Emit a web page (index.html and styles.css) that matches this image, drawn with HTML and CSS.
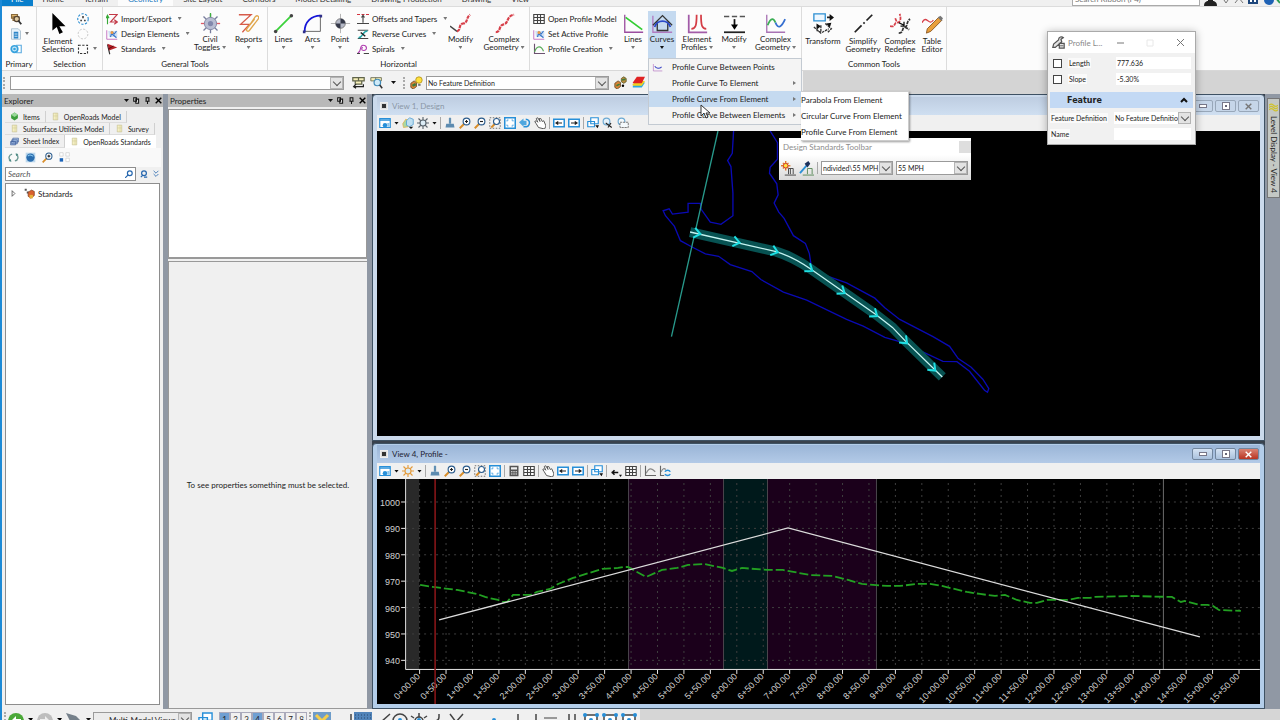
FILE: index.html
```html
<!DOCTYPE html>
<html lang="en">
<head>
  <meta charset="UTF-8">
  <meta name="viewport" content="width=device-width, initial-scale=1.0">
  <title>OpenRoads Designer</title>
  <link rel="stylesheet" href="styles.css">
</head>
<body>
  <!-- Icon sprite -->
  <svg class="sprite" aria-hidden="true">
    <symbol id="i-find" viewBox="0 0 16 16"><path d="M2 2h8v5H2zM4 5h8v5H4z" fill="#e0b870" stroke="#8a6a3a" stroke-width="1.500"/><circle cx="9" cy="8" r="3.500" fill="#dfc9a0" stroke="#554433" stroke-width="1.500"/><path d="M11 10l4 5" stroke="#333" stroke-width="2.500"/></symbol>
    <symbol id="i-doc" viewBox="0 0 16 16"><path d="M2 1h9l3 3v11H2z" fill="#e8f3fb" stroke="#9bb4c6"/><path d="M5 5h6v9H5z" fill="#2d86c8"/><path d="M6 8h4M6 11h4" stroke="#fff"/></symbol>
    <symbol id="i-info" viewBox="0 0 16 16"><path d="M9 3h6v10H9z" fill="#fff" stroke="#5cabe0" stroke-width="1.500"/><circle cx="6" cy="8" r="5.500" fill="#37a2dd"/><circle cx="6" cy="8" r="2.500" fill="none" stroke="#c8e8f8" stroke-width="1.500"/></symbol>
    <symbol id="i-cursor" viewBox="0 0 24 24"><path d="M5 0v20l5-4 3 8 4-2-4-7h7z" fill="#000"/></symbol>
    <symbol id="i-selall" viewBox="0 0 16 16"><circle cx="8" cy="8" r="7" fill="none" stroke="#2d8fd2" stroke-width="1.500" stroke-dasharray="3 2"/><path d="M8 4v3M5 11l1-2M11 11l-1-2" stroke="#333" stroke-width="2"/></symbol>
    <symbol id="i-selnone" viewBox="0 0 16 16"><circle cx="8" cy="8" r="6.500" fill="none" stroke="#b8b8b8" stroke-dasharray="3 2"/></symbol>
    <symbol id="i-fence" viewBox="0 0 16 16"><path d="M2 3h12v11H2z" fill="none" stroke="#333" stroke-width="1.500" stroke-dasharray="3 2"/></symbol>
    <symbol id="i-import" viewBox="0 0 16 16"><path d="M2 15V4M0 7l2-4 2 4" fill="none" stroke="#36a836" stroke-width="1.500"/><path d="M4 2h11L6 12h9M11 9l4 3-4 3" fill="none" stroke="#c33a48" stroke-width="1.500"/></symbol>
    <symbol id="i-design" viewBox="0 0 16 16"><path d="M1 3v12h14" fill="none" stroke="#b451b4"/><path d="M3 4h12v8H4z" fill="#cfe0f4"/><path d="M6 12l2-7 3 3 3-4M8 8l6 5" fill="none" stroke="#3775c8" stroke-width="1.500"/><circle cx="8" cy="6" r="2" fill="#ee9c45"/></symbol>
    <symbol id="i-flag" viewBox="0 0 16 16"><path d="M2 2l3 13" stroke="#333" stroke-width="1.500"/><path d="M2 1l13 5-11 4z" fill="#b32028"/><path d="M3 8l7-4" stroke="#400"/></symbol>
    <symbol id="i-civil" viewBox="0 0 24 24"><path d="M12 1v22M4 4l16 16M20 4L4 20" stroke="#777c9c" stroke-width="1.500"/><path d="M1 12h22" stroke="#e05a66" stroke-width="1.500"/><path d="M12 0v5" stroke="#3eb03e" stroke-width="1.500"/><circle cx="12" cy="12" r="7" fill="#b9bdd2" stroke="#7d819f"/><circle cx="12" cy="12" r="3" fill="#8388ac"/></symbol>
    <symbol id="i-reports" viewBox="0 0 24 24"><path d="M1 2h14L3 13h10L5 22" fill="none" stroke="#d65b4a" stroke-width="1.500"/><path d="M9 20L20 4c2-2 5 0 3 3L13 20c-2 2-4 0-3-2l9-11" fill="none" stroke="#e0a64d" stroke-width="1.500"/></symbol>
    <symbol id="i-line" viewBox="0 0 24 24"><path d="M3 21L21 3" stroke="#3bd13b" stroke-width="2"/><circle cx="3" cy="21" r="2" fill="#444"/><circle cx="21" cy="3" r="2" fill="#444"/></symbol>
    <symbol id="i-arc" viewBox="0 0 24 24"><path d="M21 3v18H3" fill="none" stroke="#555"/><path d="M3 21C3 10 11 3 21 3" fill="none" stroke="#1515d8" stroke-width="2"/><path d="M20 2h3v3h-3zM1 20h3v3H1z" fill="#30308a"/></symbol>
    <symbol id="i-point" viewBox="0 0 24 24"><path d="M12 1v22M1 12h22" stroke="#aaa"/><circle cx="12" cy="12" r="5.500" fill="#b4b8c6" stroke="#777"/><path d="M12 12V6.500a5.500 5.500 0 0 1 5.500 5.500zM12 12v5.500a5.500 5.500 0 0 1-5.500-5.500z" fill="#343848"/></symbol>
    <symbol id="i-offset" viewBox="0 0 16 16"><path d="M0 2h16" stroke="#d4333f" stroke-width="1.500" stroke-dasharray="4 2"/><path d="M8 4v9M6 6l2-3 2 3M0 14h16" fill="none" stroke="#444" stroke-width="1.500"/></symbol>
    <symbol id="i-reverse" viewBox="0 0 16 16"><path d="M1 14h14M1 3h14" stroke="#444" stroke-width="1.500"/><path d="M2 13C8 13 7 4 14 4" fill="none" stroke="#22a7a7" stroke-width="2"/><path d="M5 6l6 5" stroke="#222" stroke-width="2"/></symbol>
    <symbol id="i-spiral" viewBox="0 0 16 16"><path d="M1 13C6 13 3 3 8 3c6 0 6 7 1 7-4 0-3-4-1-4" fill="none" stroke="#b13fb1" stroke-width="1.500"/><path d="M0 14h4M9 14h7" stroke="#444" stroke-width="1.500"/></symbol>
    <symbol id="i-modify" viewBox="0 0 24 24"><path d="M0 15l8 6" fill="none" stroke="#444" stroke-width="1.500"/><path d="M8 21c5-1 1-8 7-9s3-7 8-10" fill="none" stroke="#d7404a" stroke-width="2.500" stroke-dasharray="4 1"/></symbol>
    <symbol id="i-complex" viewBox="0 0 24 24"><path d="M2 22c6 0 3-8 9-9s3-10 12-11" fill="none" stroke="#d7404a" stroke-width="2.500" stroke-dasharray="4 1"/></symbol>
    <symbol id="i-model" viewBox="0 0 16 16"><path d="M1 2h14v12H1zM1 6h14M1 10h14M6 2v12M10 2v12" fill="#fff" stroke="#444" stroke-width="1.500"/></symbol>
    <symbol id="i-profile" viewBox="0 0 16 16"><path d="M2 1v13h14" fill="none" stroke="#6c5170" stroke-width="1.500"/><path d="M2 12c3-9 9-9 12-1" fill="none" stroke="#57a957" stroke-width="1.500"/></symbol>
    <symbol id="i-pline" viewBox="0 0 24 24"><path d="M2 2v20h21" fill="none" stroke="#9b4d9f" stroke-width="1.500"/><path d="M3 5l19 14" stroke="#32cd32" stroke-width="2"/></symbol>
    <symbol id="i-pcurve" viewBox="0 0 24 24"><path d="M1 3v19h22" fill="none" stroke="#b17bc0" stroke-width="1.500"/><path d="M1 14L12 3l11 11M6 10v10h12V10" fill="none" stroke="#333" stroke-width="1.500"/><path d="M3 16C6 7 18 7 21 16" fill="none" stroke="#2a49c9" stroke-width="2"/></symbol>
    <symbol id="i-pelement" viewBox="0 0 24 24"><path d="M2 2v20h21" fill="none" stroke="#a25ba8" stroke-width="2"/><path d="M5 18c5 0 6-4 6-16M22 18c-5 0-6-4-6-16" fill="none" stroke="#d43c45" stroke-width="2"/></symbol>
    <symbol id="i-pmodify" viewBox="0 0 24 24"><path d="M0 4h24" stroke="#555" stroke-width="1.500" stroke-dasharray="6 3"/><path d="M0 22h24" stroke="#222" stroke-width="2"/><path d="M12 7v8" stroke="#111" stroke-width="2"/><path d="M8 13h8l-4 6z"/></symbol>
    <symbol id="i-pcomplex" viewBox="0 0 24 24"><path d="M2 2v20h21" fill="none" stroke="#a872b4" stroke-width="1.500"/><path d="M3 14c4-10 7-8 9-3" fill="none" stroke="#3cae55" stroke-width="2"/><path d="M12 11c3 8 7 5 11-4" fill="none" stroke="#356fd0" stroke-width="2"/></symbol>
    <symbol id="i-transform" viewBox="0 0 24 24"><path d="M1 1h13v8H1z" fill="#edf7ff" stroke="#2d8fd2" stroke-width="1.500"/><path d="M16 5h4" stroke="#222" stroke-width="2"/><path d="M19 1l5 4-5 4zM4 12l5 3-5 4zM15 12l6-1-2 6z" fill="#111"/><path d="M1 16l8 7 9-5M9 14v8l-5-2M14 12l7 6-4 4" fill="none" stroke="#333" stroke-width="1.500" stroke-dasharray="3 1"/></symbol>
    <symbol id="i-simplify" viewBox="0 0 24 24"><path d="M2 22L22 2" stroke="#222" stroke-width="2" stroke-dasharray="11 3 2 3"/></symbol>
    <symbol id="i-redefine" viewBox="0 0 24 24"><path d="M0 15c7 2 4-4 8-4s5-5 3-10M6 6l2 5" fill="none" stroke="#d7404a" stroke-width="2" stroke-dasharray="4 1"/><path d="M10 23c6 0 3-6 7-7s1-6 6-9M17 16l5 3" fill="none" stroke="#333" stroke-width="2" stroke-dasharray="4 1"/><path d="M10 11l6 3M16 10v5h-4" stroke="#111" stroke-width="1.500" fill="none"/></symbol>
    <symbol id="i-table" viewBox="0 0 24 24"><path d="M0 11c5-10 8 5 13-3" fill="none" stroke="#d7404a" stroke-width="1.500"/><path d="M6 18L19 5l4 3L10 21l-5 2z" fill="#e9a03c" stroke="#885622"/><path d="M18 5l4 4 2-3-3-3z" fill="#777"/></symbol>
    <symbol id="i-screen" viewBox="0 0 16 16"><path d="M1 2h14v4H1zM4 6v4h8V6M8 2v4" fill="#f6efb8" stroke="#60644a" stroke-width="1.500"/><path d="M2 13h12v-3M5 10l-3 3 3 2" fill="none" stroke="#222" stroke-width="1.500"/></symbol>
    <symbol id="i-lens" viewBox="0 0 16 16"><path d="M1 2h13v4H1zM7 2v4" fill="#f6efb8" stroke="#60644a"/><circle cx="9" cy="8" r="4" fill="#cfeaf8" stroke="#408bb8" stroke-width="1.500"/><path d="M12 11l3 4" stroke="#333" stroke-width="2"/></symbol>
    <symbol id="i-bulb" viewBox="0 0 16 16"><path d="M1 9l4-3 3 2v5l-4 3-3-2z" fill="#d98336" stroke="#654a22"/><path d="M3 12l4-2" stroke="#3c7d3c" stroke-width="3"/><circle cx="11" cy="5" r="4" fill="#ffe03b" stroke="#ae901c"/><path d="M10 10h3v2h-3z" fill="#666"/></symbol>
    <symbol id="i-feature" viewBox="0 0 16 16"><path d="M1 9l4-3 3 2v5l-4 3-3-2z" fill="#d98336" stroke="#654a22"/><path d="M9 3l3-2 3 2v4l-3 2-3-2z" fill="#b98a3e" stroke="#5a5a22"/><path d="M3 12l4-2M10 5l4-1" stroke="#3c7d3c" stroke-width="2"/><circle cx="11" cy="12" r="1.500"/></symbol>
    <symbol id="i-layers" viewBox="0 0 16 16"><path d="M1 12l4-4h11l-4 6H1z" fill="#2da8e0"/><path d="M1 10l4-4h11l-4 6H1z" fill="#f1d21f"/><path d="M1 8l5-7h10l-4 8H1z" fill="#e02222"/></symbol>
    <symbol id="i-pin" viewBox="0 0 10 10"><path d="M3 1h4v5H3zM2 6h6M5 6v4" fill="none" stroke="#111" stroke-width="1.500"/></symbol>
    <symbol id="i-float" viewBox="0 0 10 10"><path d="M1 1h4v5H1zM4 3h4v6H4z" fill="#ddd" stroke="#111" stroke-width="1.500"/></symbol>
    <symbol id="i-x" viewBox="0 0 10 10"><path d="M1 1l8 8M9 1L1 9" stroke="currentColor" stroke-width="2"/></symbol>
    <symbol id="i-gem" viewBox="0 0 16 16"><path d="M2 5l6-4 6 4v6l-6 4-6-4z" fill="#3c9e3c"/><path d="M2 5l6-4 6 4-6 4z" fill="#9ad79a"/></symbol>
    <symbol id="i-db" viewBox="0 0 16 16"><path d="M4 2h8v12H4z" fill="#f5efc2" stroke="#c0b987"/><path d="M4 7h8M9 2v12" stroke="#cfc896"/></symbol>
    <symbol id="i-sheets" viewBox="0 0 16 16"><path d="M5 2h10v7H5zM3 5h10v7H3zM1 8h9v6H1z" fill="#a8c1e6" stroke="#2b4c8c"/></symbol>
    <symbol id="i-refresh" viewBox="0 0 16 16"><path d="M6 3c-5 1-6 7-2 10M10 13c5-1 6-7 2-10" fill="none" stroke="#6b9893" stroke-width="2"/><path d="M4 10l1 4-4-1zM12 6l-1-4 4 1z" fill="#4b8983"/></symbol>
    <symbol id="i-globe" viewBox="0 0 16 16"><path d="M1 1h14v14H1z" fill="#bcd7ec"/><circle cx="8" cy="8" r="6" fill="#2a6dae"/><path d="M4 6c4-4 6 0 8 0" stroke="#8ecbf0" stroke-width="1.500" fill="none"/></symbol>
    <symbol id="i-zoomin" viewBox="0 0 16 16"><path d="M1 15l6-6" stroke="#d98e2b" stroke-width="2.500"/><circle cx="10" cy="6" r="4.500" fill="#fff" stroke="#285a8c" stroke-width="1.500"/><path d="M8 6h4M10 4v4" stroke="#222" stroke-width="1.500"/></symbol>
    <symbol id="i-zoomout" viewBox="0 0 16 16"><path d="M1 15l6-6" stroke="#d98e2b" stroke-width="2.500"/><circle cx="10" cy="6" r="4.500" fill="#fff" stroke="#285a8c" stroke-width="1.500"/><path d="M8 6h4" stroke="#222" stroke-width="1.500"/></symbol>
    <symbol id="i-zoomarea" viewBox="0 0 16 16"><path d="M1 1h14v14H1z" fill="none" stroke="#444" stroke-dasharray="2 2"/><path d="M3 14l5-5" stroke="#d98e2b" stroke-width="2.500"/><circle cx="10" cy="6" r="4" fill="#fff" stroke="#285a8c" stroke-width="1.500"/></symbol>
    <symbol id="i-squares" viewBox="0 0 16 16"><path d="M1 1h5v5H1zM10 1h5v5h-5zM10 9h5v5h-5z" fill="#fff" stroke="#ccc"/><path d="M1 9h5v5H1z" fill="#1a63b8"/></symbol>
    <symbol id="i-search" viewBox="0 0 10 10"><circle cx="6" cy="4" r="3" fill="none" stroke="#2566ae" stroke-width="1.500"/><path d="M4 6L0 10" stroke="#2566ae" stroke-width="1.500"/></symbol>
    <symbol id="i-searchuser" viewBox="0 0 10 10"><circle cx="5" cy="4" r="3" fill="none" stroke="#2566ae" stroke-width="1.500"/><path d="M4 6L1 9M5 9h4" stroke="#2566ae" stroke-width="1.500"/></symbol>
    <symbol id="i-standards" viewBox="0 0 16 16"><path d="M1 1h3v3H1zM4 5h3v3H4z" fill="#555"/><path d="M6 6l5-3 4 2v6l-5 4-4-3z" fill="#d9602d" stroke="#7c3c20"/><path d="M8 10h5v5H8z" fill="#e8b33c"/></symbol>
    <symbol id="i-attrs" viewBox="0 0 16 16"><path d="M1 2h14v12H1z" fill="#fff" stroke="#278fd8" stroke-width="1.500"/><path d="M1 4h14" stroke="#278fd8" stroke-width="2"/><circle cx="8" cy="11" r="3" fill="#278fd8"/><path d="M11 8h3v5h-3z" fill="#8bc4ea"/></symbol>
    <symbol id="i-style" viewBox="0 0 16 16"><path d="M1 9l4-6 5 2-2 8-6 1z" fill="#aad8a1" stroke="#e0ad4b"/><path d="M6 5l4-4 5 2v7l-5 3-4-2z" fill="#bfdff2" stroke="#4c9bcf"/><path d="M9 13h6l-3 3z" fill="#111"/></symbol>
    <symbol id="i-sun" viewBox="0 0 16 16"><path d="M8 0v16M0 8h16M2 2l12 12M14 2L2 14" stroke="currentColor" stroke-width="1.500"/><circle cx="8" cy="8" r="4" fill="#dcecf6" stroke="currentColor" stroke-width="1.500"/></symbol>
    <symbol id="i-brush" viewBox="0 0 16 16"><path d="M8 1v8" stroke="#6290b4" stroke-width="3"/><path d="M3 9h10l1 5H2z" fill="#5d8bb0"/></symbol>
    <symbol id="i-fit" viewBox="0 0 16 16"><path d="M1 1h14v14H1z" fill="#fff" stroke="#278fd8" stroke-width="2"/><path d="M4 6V4h2M10 4h2v2M4 10v2h2M10 12h2v-2" fill="none" stroke="#278fd8"/></symbol>
    <symbol id="i-rotate" viewBox="0 0 16 16"><path d="M6 13c10 1 10-10 3-10" fill="none" stroke="#278fd8" stroke-width="2"/><path d="M0 7l6-5v3h4v6H6v2z" fill="#4fa7df"/></symbol>
    <symbol id="i-hand" viewBox="0 0 16 16"><path d="M6 14L3 9 1 6l2-1 2 2-2-5 2-1 3 5-1-4 2 0 2 4 2-1 3 7-2 4z" fill="#fff" stroke="#555" stroke-width="1.300"/></symbol>
    <symbol id="i-prev" viewBox="0 0 16 16"><path d="M1 3h14v10H1z" fill="#fff" stroke="#278fd8" stroke-width="2"/><path d="M4 8h8M7 6L4 8l3 2" fill="none" stroke="#222" stroke-width="1.500"/></symbol>
    <symbol id="i-next" viewBox="0 0 16 16"><path d="M1 3h14v10H1z" fill="#fff" stroke="#278fd8" stroke-width="2"/><path d="M4 8h8M9 6l3 2-3 2" fill="none" stroke="#222" stroke-width="1.500"/></symbol>
    <symbol id="i-copyview" viewBox="0 0 16 16"><path d="M5 1h10v8H5zM1 6h9v7H1z" fill="#fff" stroke="#278fd8" stroke-width="1.500"/><path d="M11 11h5l-2 4z" fill="#111"/></symbol>
    <symbol id="i-clip" viewBox="0 0 16 16"><circle cx="6" cy="6" r="4.500" fill="#e4f1fa" stroke="#6ba9d3" stroke-width="1.500"/><path d="M5 8l8 6M12 8l-4 6" stroke="#222" stroke-width="1.500"/></symbol>
    <symbol id="i-clipmask" viewBox="0 0 16 16"><circle cx="6" cy="6" r="4.500" fill="#f4f9fc" stroke="#6ba9d3" stroke-width="1.500"/><path d="M4 7h11v7H4z" fill="#f4f9fc" stroke="#555" stroke-dasharray="3 1"/></symbol>
    <symbol id="i-calc" viewBox="0 0 16 16"><path d="M2 1h12v14H2z" fill="#555"/><path d="M4 3h8v3H4z" fill="#eee"/><path d="M4 9h8M4 12h8" stroke="#eee" stroke-width="1.500" stroke-dasharray="2 1"/></symbol>
    <symbol id="i-goto" viewBox="0 0 16 16"><path d="M2 10h9M6 7l-3 3 3 3" fill="none" stroke="#111" stroke-width="2"/><path d="M12 13h4l-2 3z" fill="#111"/></symbol>
    <symbol id="i-axes" viewBox="0 0 16 16"><path d="M2 1v13h14" fill="none" stroke="#666" stroke-width="1.500"/><path d="M3 11c4-9 8-6 12-2" fill="none" stroke="#888" stroke-width="1.500"/></symbol>
    <symbol id="i-axesref" viewBox="0 0 16 16"><path d="M2 1v13h5" fill="none" stroke="#666" stroke-width="1.500"/><path d="M3 9c2-5 4-5 6-3" fill="none" stroke="#888" stroke-width="1.500"/><path d="M8 9a4 4 0 0 1 7 0M15 12a4 4 0 0 1-7 0" fill="none" stroke="#278fd8" stroke-width="2"/></symbol>
    <symbol id="i-menupoints" viewBox="0 0 16 16"><path d="M2 3v10h13" fill="none" stroke="#b877c4"/><path d="M4 6c2 4 7 4 10 1" fill="none" stroke="#3a44c6" stroke-width="1.500"/></symbol>
    <symbol id="i-std1" viewBox="0 0 16 16"><path d="M5 0v10M0 5h10M2 2l6 6M8 2L2 8" stroke="#e07a2e" stroke-width="1.500"/><circle cx="5" cy="5" r="2.500" fill="#ffe23e" stroke="#c33"/><path d="M4 15h12M8 14V8h5v6M10 8v6" fill="none" stroke="#444"/></symbol>
    <symbol id="i-std2" viewBox="0 0 16 16"><path d="M1 13L8 5" stroke="#2b90d6" stroke-width="2"/><path d="M6 3l4-3 2 3-3 4z" fill="#1b2f5a"/><path d="M4 15h12M9 14V8h5v6" fill="none" stroke="#5a8a5a"/></symbol>
    <symbol id="i-tool" viewBox="0 0 16 16"><path d="M1 14l1-4 6-5c0-4 4-5 6-3l-3 2 1 3-8 7zM9 9h6v6H9z" fill="#e4e4e4" stroke="#555" stroke-width="1.500"/><path d="M10 12h4" stroke="#555"/></symbol>
  </svg>

  <div class="app">
    <!-- Ribbon tabs -->
    <nav class="tabs">
      <a class="tab file" href="#">File</a>
      <a class="tab" href="#">Home</a>
      <a class="tab" href="#">Terrain</a>
      <a class="tab active" href="#">Geometry</a>
      <a class="tab" href="#">Site Layout</a>
      <a class="tab" href="#">Corridors</a>
      <a class="tab" href="#">Model Detailing</a>
      <a class="tab" href="#">Drawing Production</a>
      <a class="tab" href="#">Drawing</a>
      <a class="tab" href="#">View</a>
      <div class="tabs-right">
        <input class="ribbon-search" type="text" placeholder="Search Ribbon (F4)" aria-label="Search Ribbon">
        <svg width="80" height="14" viewBox="0 0 80 14"><path d="M4 14c0-5 4-5 4-5V4h5v5s4 0 4 5z" fill="#222"/><path d="M24 8l2 3 2-3M35 11l4-5 4 5" fill="none" stroke="#777"/><path d="M48 3h10v9H48z" fill="#1e477c"/><path d="M51 5v5M55 7v3" stroke="#fff" stroke-width="2"/><circle cx="69" cy="8" r="5" fill="#1f62b5"/><path d="M76 6l4 5" stroke="#2a9b52" stroke-width="2"/></svg>
      </div>
    </nav>

    <!-- Ribbon -->
    <div class="ribbon">
      <section class="group g-primary">
        <div class="tools">
          <div class="stack">
            <button class="icon-btn" aria-label="Find"><svg><use href="#i-find"/></svg></button>
            <button class="icon-btn" aria-label="Models"><svg><use href="#i-doc"/></svg></button>
            <button class="icon-btn" aria-label="Information"><svg><use href="#i-info"/></svg></button>
          </div>
          <i class="caret"></i>
        </div>
        <h2>Primary</h2>
      </section>
      <section class="group g-selection roomy">
        <div class="tools">
          <button class="big"><svg><use href="#i-cursor"/></svg><span>Element Selection</span></button>
          <div class="stack">
            <button class="icon-btn" aria-label="Select all"><svg><use href="#i-selall"/></svg></button>
            <button class="icon-btn" aria-label="Select none"><svg><use href="#i-selnone"/></svg></button>
            <button class="icon-btn" aria-label="Place fence"><svg><use href="#i-fence"/></svg></button>
          </div>
          <i class="caret low"></i>
        </div>
        <h2>Selection</h2>
      </section>
      <section class="group g-general">
        <div class="tools">
          <div class="stack">
            <button class="small"><svg><use href="#i-import"/></svg>Import/Export<i class="caret"></i></button>
            <button class="small"><svg><use href="#i-design"/></svg>Design Elements<i class="caret"></i></button>
            <button class="small"><svg><use href="#i-flag"/></svg>Standards<i class="caret"></i></button>
          </div>
          <button class="big"><svg><use href="#i-civil"/></svg><span>Civil<br>Toggles <i class="caret"></i></span></button>
          <button class="big"><svg><use href="#i-reports"/></svg><span>Reports<br><i class="caret"></i></span></button>
        </div>
        <h2>General Tools</h2>
      </section>
      <section class="group g-horizontal">
        <div class="tools">
          <button class="big"><svg><use href="#i-line"/></svg><span>Lines<br><i class="caret"></i></span></button>
          <button class="big"><svg><use href="#i-arc"/></svg><span>Arcs<br><i class="caret"></i></span></button>
          <button class="big"><svg><use href="#i-point"/></svg><span>Point<br><i class="caret"></i></span></button>
          <div class="stack">
            <button class="small"><svg><use href="#i-offset"/></svg>Offsets and Tapers<i class="caret"></i></button>
            <button class="small"><svg><use href="#i-reverse"/></svg>Reverse Curves<i class="caret"></i></button>
            <button class="small"><svg><use href="#i-spiral"/></svg>Spirals<i class="caret"></i></button>
          </div>
          <button class="big"><svg><use href="#i-modify"/></svg><span>Modify<br><i class="caret"></i></span></button>
          <button class="big"><svg><use href="#i-complex"/></svg><span>Complex<br>Geometry <i class="caret"></i></span></button>
        </div>
        <h2>Horizontal</h2>
      </section>
      <section class="group g-vertical">
        <div class="tools">
          <div class="stack">
            <button class="small"><svg><use href="#i-model"/></svg>Open Profile Model</button>
            <button class="small"><svg><use href="#i-design"/></svg>Set Active Profile</button>
            <button class="small"><svg><use href="#i-profile"/></svg>Profile Creation<i class="caret"></i></button>
          </div>
          <button class="big"><svg><use href="#i-pline"/></svg><span>Lines<br><i class="caret"></i></span></button>
          <div class="dropdown">
            <button class="big open"><svg><use href="#i-pcurve"/></svg><span>Curves<br><i class="caret"></i></span></button>
            <div class="menu">
              <button class="item"><svg><use href="#i-menupoints"/></svg>Profile Curve Between Points</button>
              <button class="item more">Profile Curve To Element</button>
              <button class="item more hover">Profile Curve From Element</button>
              <button class="item more">Profile Curve Between Elements</button>
              <div class="submenu">
                <button class="item">Parabola From Element</button>
                <button class="item">Circular Curve From Element</button>
                <button class="item">Profile Curve From Element</button>
              </div>
              <svg class="pointer" viewBox="0 0 10 15"><path d="M1 1v11l3-3 2 5 2-1-2-4h4z" fill="#fff" stroke="#333"/></svg>
            </div>
          </div>
          <button class="big"><svg><use href="#i-pelement"/></svg><span>Element<br>Profiles <i class="caret"></i></span></button>
          <button class="big"><svg><use href="#i-pmodify"/></svg><span>Modify<br><i class="caret"></i></span></button>
          <button class="big"><svg><use href="#i-pcomplex"/></svg><span>Complex<br>Geometry <i class="caret"></i></span></button>
        </div>
      </section>
      <section class="group g-common roomy">
        <div class="tools">
          <button class="big"><svg><use href="#i-transform"/></svg><span>Transform</span></button>
          <button class="big"><svg><use href="#i-simplify"/></svg><span>Simplify Geometry</span></button>
          <button class="big"><svg><use href="#i-redefine"/></svg><span>Complex Redefine</span></button>
          <button class="big"><svg><use href="#i-table"/></svg><span>Table Editor</span></button>
        </div>
        <h2>Common Tools</h2>
      </section>
    </div>

    <!-- Quick toolbar -->
    <div class="quickbar">
      <div class="quick-left">
        <i class="grip"></i>
        <span class="combo template"><select aria-label="Template"><option></option></select></span>
        <svg class="ico"><use href="#i-screen"/></svg>
        <svg class="ico"><use href="#i-lens"/></svg>
        <i class="caret dark"></i>
        <i class="grip"></i>
        <svg class="ico"><use href="#i-bulb"/></svg>
        <span class="combo feature"><select aria-label="Feature definition"><option>No Feature Definition</option></select></span>
        <svg class="ico"><use href="#i-feature"/></svg>
        <svg class="ico"><use href="#i-layers"/></svg>
      </div>
    </div>

    <main class="workspace">
      <!-- Explorer -->
      <aside class="panel explorer">
        <header class="panel-head">Explorer
          <span class="head-tools"><i class="caret dark"></i><svg><use href="#i-float"/></svg><svg><use href="#i-pin"/></svg><svg><use href="#i-x"/></svg></span>
        </header>
        <div class="etabs">
          <div class="etab-row"><button class="etab"><svg><use href="#i-gem"/></svg>Items</button><button class="etab"><svg><use href="#i-db"/></svg>OpenRoads Model</button></div>
          <div class="etab-row"><button class="etab"><svg><use href="#i-db"/></svg>Subsurface Utilities Model</button><button class="etab"><svg><use href="#i-db"/></svg>Survey</button></div>
          <div class="etab-row"><button class="etab"><svg><use href="#i-sheets"/></svg>Sheet Index</button><button class="etab current"><svg><use href="#i-db"/></svg>OpenRoads Standards</button></div>
        </div>
        <div class="etools">
          <svg><use href="#i-refresh"/></svg><svg><use href="#i-globe"/></svg><svg><use href="#i-zoomin"/></svg><svg><use href="#i-squares"/></svg>
        </div>
        <div class="esearch">
          <label class="search-box"><input type="text" placeholder="Search" aria-label="Search explorer"><svg><use href="#i-search"/></svg></label>
          <svg><use href="#i-searchuser"/></svg>
          <svg viewBox="0 0 10 10"><path d="M2 1l3 3 3-3M2 5l3 3 3-3" fill="none" stroke="#2566ae"/></svg>
        </div>
        <div class="tree">
          <div class="node"><svg viewBox="0 0 10 10"><path d="M3 1l4 4-4 4z" fill="#fff" stroke="#333"/></svg><svg class="ico"><use href="#i-standards"/></svg>Standards</div>
        </div>
      </aside>

      <!-- Properties -->
      <aside class="panel properties">
        <header class="panel-head">Properties
          <span class="head-tools"><i class="caret dark"></i><svg><use href="#i-float"/></svg><svg><use href="#i-pin"/></svg><svg><use href="#i-x"/></svg></span>
        </header>
        <div class="prop-list"></div>
        <div class="prop-empty">To see properties something must be selected.</div>
      </aside>

      <div class="views">
        <section class="view inactive design">
          <header class="view-title"><i class="app-dot"></i>View 1, Design
            <span class="win-btns"><button aria-label="Minimize"><i class="w-min"></i></button><button aria-label="Maximize"><i class="w-max"></i></button><button aria-label="Close"><svg><use href="#i-x"/></svg></button></span>
          </header>
          <div class="view-tools">
            <svg><use href="#i-attrs"/></svg><i class="caret dark"></i><svg><use href="#i-style"/></svg><svg class="gray-sun"><use href="#i-sun"/></svg><i class="caret dark"></i><i class="sep"></i>
            <svg><use href="#i-brush"/></svg><svg><use href="#i-zoomin"/></svg><svg><use href="#i-zoomout"/></svg><svg><use href="#i-zoomarea"/></svg><svg><use href="#i-fit"/></svg><svg><use href="#i-rotate"/></svg><svg><use href="#i-hand"/></svg><i class="sep"></i>
            <svg><use href="#i-prev"/></svg><svg><use href="#i-next"/></svg><i class="sep"></i>
            <svg><use href="#i-copyview"/></svg><svg><use href="#i-clip"/></svg><svg><use href="#i-clipmask"/></svg>
          </div>
          <svg class="canvas" viewBox="-819 3 2649 918">
            <g fill="none" stroke="#0a0ab4" stroke-width="4">
              <path d="M250 3L246 70 232 92 242 110 248 190V258L212 284 180 277 152 238 150 221H113V247L66 253 56 237 38 243 45 258 72 290 90 333 125 352 165 373 205 380 240 405 305 426 332 450 400 488 470 512 590 570 640 590 705 624 760 640 880 696 922 697 960 726 1005 783 1014 789 1018 778 1000 750 965 714 926 688 900 651 850 622 750 570 705 535 675 506 590 460 520 435 483 405 478 372 466 341 430 318 402 266 386 247 372 220 384 195 380 162 358 130 360 112 382 88V38L360 3"/>
            </g>
            <path d="M203 3L63 622" stroke="#289a8c" stroke-width="4"/>
            <path d="M119 307L378 366Q430 382 483 419L678 555 728 594 768 636 878 743" fill="none" stroke="#075252" stroke-width="30"/>
            <path d="M119 307L378 366Q430 382 483 419L678 555 728 594 768 636 878 743" fill="none" stroke="#c4f4f2" stroke-width="4"/>
            <g id="arrows" fill="none" stroke="#1fe0e4" stroke-width="6"></g>
          </svg>
        </section>

        <section class="view profile">
          <header class="view-title"><i class="app-dot"></i>View 4, Profile -
            <span class="win-btns"><button aria-label="Minimize"><i class="w-min"></i></button><button aria-label="Maximize"><i class="w-max"></i></button><button class="close" aria-label="Close"><svg><use href="#i-x"/></svg></button></span>
          </header>
          <div class="view-tools">
            <svg><use href="#i-attrs"/></svg><i class="caret dark"></i><svg class="warm-sun"><use href="#i-sun"/></svg><i class="caret dark"></i><i class="sep"></i>
            <svg><use href="#i-brush"/></svg><svg><use href="#i-zoomin"/></svg><svg><use href="#i-zoomout"/></svg><svg><use href="#i-zoomarea"/></svg><svg><use href="#i-fit"/></svg><i class="sep"></i>
            <svg><use href="#i-calc"/></svg><svg><use href="#i-model"/></svg><i class="sep"></i>
            <svg><use href="#i-hand"/></svg><svg><use href="#i-prev"/></svg><svg><use href="#i-next"/></svg><i class="sep"></i>
            <svg><use href="#i-copyview"/></svg><i class="sep"></i>
            <svg><use href="#i-goto"/></svg><svg><use href="#i-model"/></svg><i class="sep"></i>
            <svg><use href="#i-axes"/></svg><svg><use href="#i-axesref"/></svg>
          </div>
          <svg class="canvas" viewBox="377 479 883 225">
            <rect x="406" y="479" width="13" height="190" fill="#292929"/>
            <rect x="628" y="479" width="95" height="190" fill="#1b001b"/>
            <rect x="723" y="479" width="45" height="190" fill="#00191b"/>
            <rect x="768" y="479" width="108" height="190" fill="#1b001b"/>
            <path d="M628.500 479V669M723.500 479V669M767.500 479V669M876.500 479V669" stroke="#4a454c"/>
            <g id="grid" stroke="#3f3f3f" stroke-dasharray="2 4"></g>
            <path d="M1163.500 479V669" stroke="#6d6d6d"/>
            <path d="M405.500 479V669.500H1260" fill="none" stroke="#e6e6e6"/>
            <g id="ticks" stroke="#e6e6e6"></g>
            <g id="labels" class="axis-labels"></g>
            <polyline points="420,585 433,587 457,590 477,594 485,597 498,600 503,602 507,602 513,595 530,595 537,592 550,589 558,584 573,578 602,569 618,568 623,567 628,567 646,577 662,570 677,568 688,565 704,564 723,568 732,571 742,568 767,570 783,570 810,575 833,576 848,580 862,584 887,586 900,586 917,584 930,584 942,586 967,592 980,594 995,596 1005,595 1017,600 1030,603 1037,603 1047,600 1067,600 1078,598 1090,598 1095,597 1130,596 1172,597 1181,602 1185,601 1200,605 1208,605 1213,606 1219,610 1241,611" fill="none" stroke="#22a022" stroke-width="1.800" stroke-dasharray="9 3"/>
            <polyline points="439,620 788,528 1200,637" fill="none" stroke="#dcdcdc" stroke-width="1.300"/>
            <path d="M435 479V704" stroke="#8e1719" stroke-width="1.500"/>
          </svg>
        </section>
      </div>

      <div class="dock">
        <button class="dock-tab"><svg viewBox="0 0 16 16"><path d="M0 4q4-4 8 0t8 0M0 8q4-4 8 0t8 0M0 12q4-4 8 0t8 0" fill="none" stroke="#cfc22c" stroke-width="2"/></svg>Level Display - View 4</button>
      </div>
    </main>

    <!-- Status bar -->
    <footer class="statusbar">
      <i class="grip"></i>
      <svg class="nav" viewBox="0 0 76 18"><circle cx="8" cy="9" r="8" fill="#4aa838"/><path d="M3 9l5-5v3h5v4H8v3z" fill="#fff"/><path d="M20 6h5l-2 3z"/><circle cx="37" cy="9" r="8" fill="#bdbdbd"/><path d="M42 9l-5-5v3h-5v4h5v3z" fill="#eee"/><path d="M49 6h5l-2 3z"/><path d="M58 1l10 3 6 6-10 3z" fill="#75808a"/></svg>
      <i class="caret dark"></i>
      <span class="combo models"><select aria-label="View group"><option>Multi-Model Views</option></select></span>
      <svg class="ico"><use href="#i-copyview"/></svg>
      <div class="view-toggles"><button class="on">1</button><button>2</button><button>3</button><button class="on">4</button><button>5</button><button>6</button><button>7</button><button>8</button></div>
      <i class="grip"></i>
      <svg class="accu" viewBox="0 0 18 18"><path d="M0 0h18v18H0z" fill="#6d9cc9"/><path d="M3 3l12 12M15 3L3 15" stroke="#f4cd4a" stroke-width="3"/></svg>
      <svg class="snaps" viewBox="0 0 300 18"><g fill="none" stroke="#444" stroke-width="1.500"><path d="M12 2v16M42 10l9-8M100 2v3q0 4-5 4M111 2l6 8 7-8M179 2v12M197 2v12M230 2v12M236 2v12"/><circle cx="61" cy="9" r="7"/><circle cx="80" cy="9" r="4"/><path d="M72 4l3 2M80 1v4M88 4l-3 2"/></g><path d="M15 0h18v16H15z" fill="#5083b9"/><path d="M16 3h16M16 6h16M16 9h16" stroke="#28486e" stroke-dasharray="1 2"/><path d="M205 6h13" stroke="#999" stroke-width="2"/><g fill="#fff" stroke="#444" stroke-width="1.500"><path d="M246 3h12v12h-12zM265 3h12v12h-12zM284 3h12v12h-12z"/></g><g fill="#278fd8"><circle cx="246" cy="3" r="2"/><circle cx="258" cy="3" r="2"/><circle cx="265" cy="3" r="2"/><circle cx="277" cy="3" r="2"/><circle cx="284" cy="3" r="2"/><circle cx="296" cy="3" r="2"/><circle cx="252" cy="8" r="2"/><circle cx="271" cy="8" r="2"/><circle cx="290" cy="8" r="2"/><circle cx="61" cy="8" r="2"/><circle cx="80" cy="8" r="2"/><circle cx="155" cy="8" r="2"/></g></svg>
    </footer>

    <!-- Floating design standards toolbar -->
    <div class="float-bar">
      <header>Design Standards Toolbar<i></i></header>
      <div class="float-tools">
        <svg><use href="#i-std1"/></svg><svg><use href="#i-std2"/></svg><i class="sep"></i>
        <span class="combo"><select aria-label="Design standard"><option>ndivided\55 MPH</option></select></span>
        <span class="combo"><select aria-label="Design speed"><option>55 MPH</option></select></span>
      </div>
    </div>

    <!-- Floating tool settings -->
    <div class="dialog">
      <header><svg class="ico"><use href="#i-tool"/></svg>Profile L...
        <svg class="dlg-btns" viewBox="0 0 76 10"><path d="M5 5h7" stroke="#777"/><path d="M35 2h6v6h-6z" fill="none" stroke="#e8e8e8"/><path d="M65 1l7 7M72 1l-7 7" stroke="#777"/></svg>
      </header>
      <div class="dlg-body">
        <div class="field"><input type="checkbox" id="useLength"><label for="useLength">Length</label><input type="text" value="777.636" aria-label="Length value"></div>
        <div class="field"><input type="checkbox" id="useSlope"><label for="useSlope">Slope</label><input type="text" value="-5.30%" aria-label="Slope value"></div>
        <h3>Feature<svg viewBox="0 0 8 6"><path d="M1 5l3-3 3 3" fill="none" stroke="#111" stroke-width="2"/></svg></h3>
        <div class="field wide"><label for="featureDef">Feature Definition</label><span class="combo"><select id="featureDef"><option>No Feature Definition</option></select></span></div>
        <div class="field wide"><label for="featureName">Name</label><input type="text" id="featureName"></div>
      </div>
    </div>
  </div>

  <script>
    const NS = 'http://www.w3.org/2000/svg';

    function add(parent, tag, attrs, text) {
      const el = document.createElementNS(NS, tag);
      for (const key in attrs) el.setAttribute(key, attrs[key]);
      if (text) el.textContent = text;
      document.getElementById(parent).appendChild(el);
    }

    // Direction arrows along the alignment: x, y, angle
    const arrows = [[150, 313, 12], [268, 339, 12], [383, 368, 18], [487, 424, 35], [584, 491, 35], [682, 560, 36], [772, 642, 44], [857, 724, 44]];
    arrows.forEach(([x, y, a]) => add('arrows', 'path', { d: 'M-19-15L0 0L-19 15', transform: `translate(${x} ${y}) rotate(${a})` }));

    // Elevation axis
    for (let i = 0; i < 7; i++) {
      const y = 502 + i * 26.4;
      add('grid', 'path', { d: `M406 ${y}H1260` });
      add('ticks', 'path', { d: `M401 ${y}H405` });
      add('labels', 'text', { x: 400, y: y + 4 }, String(1000 - i * 10));
    }

    // Station axis, one tick each 50 feet
    for (let i = 0; i < 32; i++) {
      const x = 419.5 + i * 26.44;
      const label = Math.floor(i / 2) + (i % 2 ? '+50.00' : '+00.00');
      add('grid', 'path', { d: `M${x} 483V669` });
      add('ticks', 'path', { d: `M${x} 670V674` });
      add('labels', 'text', { transform: `translate(${x + 1} 677) rotate(-45)` }, label);
    }
  </script>
</body>
</html>
```
FILE: styles.css
```css
* {
  box-sizing: border-box;
}

body {
  margin: 0;
  font-family: Lato, "Noto Sans", sans-serif;
  font-size: 8px;
  color: #222;
  background: #d4d4d4;
}

button, input, select {
  font: inherit;
  color: inherit;
  margin: 0;
  padding: 0;
  border: none;
  background: none;
  border-radius: 0;
}

h2, h3 {
  margin: 0;
  font-size: 8px;
  font-weight: normal;
}

svg {
  flex: none;
}

.sprite {
  position: absolute;
  width: 0;
  height: 0;
}

.app {
  position: relative;
  display: flex;
  flex-direction: column;
  height: 100vh;
  overflow: hidden;
  border-left: 2px solid #1d8ad6;
}

.ico {
  width: 13px;
  height: 13px;
}

.caret {
  display: inline-block;
  flex: none;
  width: 4px;
  height: 3px;
  background: #777;
  clip-path: polygon(0 0, 100% 0, 50% 100%);
  vertical-align: middle;
}

.caret.dark {
  width: 5px;
  background: #111;
}

.grip {
  flex: none;
  width: 2px;
  height: 12px;
  border-left: 2px dotted #aaa;
}

.sep {
  width: 1px;
  height: 12px;
  background: #a8a8a8;
}

/* drop-downs */
.combo {
  position: relative;
  display: flex;
  height: 14px;
  border: 1px solid #9a9a9a;
  background: #fff;
  font-size: 7px;
  overflow: hidden;
}

.combo select {
  appearance: none;
  flex: 1;
  min-width: 0;
  padding: 0 11px 0 1px;
}

.combo::before {
  content: "";
  position: absolute;
  right: 0;
  top: 0;
  bottom: 0;
  width: 11px;
  background: #e3e3e3;
  border: 1px solid #b4b4b4;
  pointer-events: none;
}

.combo::after {
  content: "";
  position: absolute;
  right: 3px;
  top: 2px;
  width: 5px;
  height: 5px;
  border: solid #555;
  border-width: 0 1px 1px 0;
  transform: rotate(45deg);
  pointer-events: none;
}

/* ribbon tabs */
.tabs {
  flex: 0 0 7px;
  display: flex;
  align-items: flex-end;
  overflow: hidden;
  background: #f0f0f0;
  border-bottom: 1px solid #dcdcdc;
}

.tab {
  padding: 0 10px;
  line-height: 14px;
  color: #333;
  text-decoration: none;
  white-space: nowrap;
}

.tab.file {
  padding: 0 9px;
  background: #0a7fcc;
  color: #fff;
}

.tab.active {
  background: #fcfcfc;
  color: #1677bd;
}

.tabs-right {
  display: flex;
  align-items: flex-end;
  margin-left: auto;
}

.ribbon-search {
  width: 128px;
  height: 14px;
  padding: 0 2px;
  background: #fff;
  border: 1px solid #aaa;
}

/* ribbon */
.ribbon {
  flex: 0 0 64px;
  display: flex;
  background: #fcfcfc;
  border-bottom: 1px solid #d8d8d8;
}

.group {
  display: flex;
  flex-direction: column;
  justify-content: space-between;
  border-right: 1px solid #dcdcdc;
}

.group h2 {
  line-height: 12px;
  text-align: center;
  white-space: nowrap;
}

.tools {
  display: grid;
  padding-top: 4px;
}

.g-primary .tools { grid-template-columns: 28px 6px; }
.g-selection .tools { grid-template-columns: 42px 8px 15px; }
.g-general .tools { grid-template-columns: 87px 40px 37px; }
.g-horizontal .tools { grid-template-columns: 31px 27px 28px 88px 37px 50px; }
.g-vertical .tools { grid-template-columns: 88px 30px 28px 42px 32px 51px; }
.g-common .tools { grid-template-columns: 42px 38px 36px 28px; }

.tools > .caret {
  margin-top: 21px;
  margin-left: -5px;
}

.g-selection .tools > .caret {
  margin-left: 6px;
}

.tools > .caret.low {
  margin-top: 36px;
}

.stack {
  display: flex;
  flex-direction: column;
}

.icon-btn {
  display: grid;
  place-content: center;
  height: 15px;
}

.icon-btn svg,
.small svg {
  width: 12px;
  height: 12px;
}

.small {
  display: flex;
  align-items: center;
  gap: 3px;
  height: 15px;
  padding-left: 3px;
  white-space: nowrap;
}

.small .caret {
  margin-left: 3px;
}

.big {
  display: flex;
  flex-direction: column;
  align-items: center;
  height: 47px;
  padding-top: 2px;
  line-height: 8px;
}

.big svg {
  width: 21px;
  height: 21px;
  margin-bottom: 1px;
}

.roomy .big svg {
  margin-bottom: 3px;
}

.big .caret {
  vertical-align: 1px;
}

.big.open {
  width: 28px;
  background: #c5daf0;
}

.big.open .caret {
  background: #111;
}

/* curves menu */
.dropdown {
  position: relative;
}

.menu {
  position: absolute;
  z-index: 5;
  top: 47px;
  left: 0;
  width: 154px;
  padding-bottom: 1px;
  background: #f4f4f4;
  border: 1px solid #c3cad2;
}

.item {
  position: relative;
  display: flex;
  align-items: center;
  width: 100%;
  height: 16px;
  padding-left: 23px;
  white-space: nowrap;
}

.item svg {
  position: absolute;
  left: 3px;
  width: 11px;
  height: 11px;
}

.item.hover {
  background: #c5daf0;
}

.item.more::after {
  content: "";
  margin-left: auto;
  margin-right: 5px;
  width: 3px;
  height: 4px;
  background: #777;
  clip-path: polygon(0 0, 100% 50%, 0 100%);
}

.submenu {
  position: absolute;
  top: 32px;
  left: 152px;
  width: 108px;
  background: #fff;
  border: 1px solid #ccc;
  border-left: none;
  box-shadow: 1px 1px 2px rgba(0, 0, 0, 0.4);
}

.submenu .item {
  padding-left: 0;
}

.pointer {
  position: absolute;
  top: 45px;
  left: 51px;
  width: 10px;
  height: 15px;
}

/* quick toolbar */
.quickbar {
  flex: 0 0 23px;
  background: #d4d4d4;
}

.quick-left {
  display: flex;
  align-items: center;
  width: 801px;
  height: 100%;
  padding-left: 1px;
  gap: 5px;
  background: #f2f2f2;
}

.combo.template {
  flex: 0 0 334px;
  margin-right: 3px;
}

.combo.feature {
  flex: 0 0 183px;
  margin-left: -2px;
}

.quick-left > .caret {
  margin: 0 2px 0 3px;
}

/* workspace */
.workspace {
  flex: 1;
  display: flex;
  gap: 5px;
  min-height: 0;
  background: #9098a4;
}

.panel {
  display: flex;
  flex-direction: column;
  min-width: 0;
  background: #f0f0f0;
}

.explorer {
  flex: 0 0 161px;
}

.properties {
  flex: 0 0 199px;
}

.panel-head {
  display: flex;
  align-items: center;
  height: 13px;
  padding: 0 1px 0 2px;
  background: #b9b9b9;
}

.head-tools {
  display: flex;
  align-items: center;
  gap: 4px;
  margin-left: auto;
  color: #000;
}

.head-tools svg {
  width: 7px;
  height: 7px;
}

.etabs {
  padding: 4px 3px 0;
  font-size: 7px;
}

.etab-row {
  display: flex;
  height: 12px;
}

.etab-row:last-child {
  height: 13px;
}

.etab {
  display: flex;
  align-items: center;
  gap: 4px;
  padding: 0 5px;
  border-right: 1px solid #d0d0d0;
  border-bottom: 1px solid #dcdcdc;
  white-space: nowrap;
}

.etab svg {
  width: 9px;
  height: 9px;
}

.etab.current {
  background: #fff;
  border: none;
}

.etools {
  display: flex;
  align-items: center;
  gap: 6px;
  height: 19px;
  margin: 0 2px;
  padding-left: 4px;
  background: #f9f9f9;
}

.etools svg {
  width: 11px;
  height: 11px;
}

.esearch {
  display: flex;
  align-items: center;
  gap: 4px;
  height: 14px;
  padding-left: 3px;
}

.search-box {
  display: flex;
  align-items: center;
  width: 131px;
  height: 14px;
  padding: 0 2px;
  background: #fff;
  border: 1px solid #8d8d8d;
}

.search-box input {
  flex: 1;
  min-width: 0;
  outline: none;
  font-style: italic;
}

.search-box input::placeholder {
  color: #555;
}

.esearch svg {
  width: 8px;
  height: 8px;
}

.tree {
  flex: 1;
  margin: 2px 3px 4px;
  padding: 4px;
  background: #fff;
  border: 1px solid #8d8d8d;
}

.node {
  display: flex;
  align-items: center;
  gap: 3px;
}

.node svg {
  width: 7px;
  height: 7px;
}

.node .ico {
  width: 11px;
  height: 11px;
  margin-left: 4px;
}

.prop-list {
  flex: 0 0 150px;
  margin-top: 2px;
  background: #fff;
  border: 1px solid #999;
  border-width: 1px 1px 2px 1px;
}

.prop-empty {
  flex: 1;
  display: flex;
  align-items: center;
  justify-content: center;
  margin-top: 2px;
  border: 1px solid #999;
  border-right: none;
  white-space: nowrap;
}

/* views */
.views {
  flex: 1;
  display: flex;
  flex-direction: column;
  gap: 2px;
  min-width: 0;
  background: #39424d;
}

.view {
  display: flex;
  flex-direction: column;
  flex: 265;
  min-height: 0;
  padding: 1px 4px 4px;
  background: #b3cde9;
  border: 1px solid #3e5163;
  border-radius: 4px 4px 0 0;
}

.view.design {
  flex: 347;
  padding-top: 2px;
  background: #cbdaec;
}

.view-title {
  flex: 0 0 18px;
  display: flex;
  align-items: center;
  gap: 5px;
  padding-left: 4px;
  background: linear-gradient(#9ab5d7, #b3cae7);
  color: #223;
}

.inactive .view-title {
  background: linear-gradient(#becde1, #cfdff1);
  color: #8b97a6;
}

.app-dot {
  width: 6px;
  height: 6px;
  background: #333;
  border: 1px solid #ddd;
  outline: 1px solid #eee;
}

.win-btns {
  display: flex;
  gap: 2px;
  margin-left: auto;
  margin-right: 1px;
}

.win-btns button {
  display: grid;
  place-content: center;
  width: 21px;
  height: 12px;
  color: #777;
  background: linear-gradient(#d5e3f3, #a9c1dd);
  border: 1px solid #71869e;
  border-radius: 2px;
}

.inactive .win-btns button {
  background: #c6d6e9;
  border-color: #98a7b9;
}

.win-btns .close {
  color: #fff;
  background: linear-gradient(#d98273, #b93422);
}

.win-btns svg {
  width: 7px;
  height: 7px;
}

.w-min {
  width: 8px;
  height: 4px;
  background: #fff;
  border: 1px solid #778;
}

.w-max {
  width: 6px;
  height: 6px;
  background: #667;
  border: 2px solid #fff;
  outline: 1px solid #778;
}

.view-tools {
  flex: 0 0 16px;
  display: flex;
  align-items: center;
  gap: 3px;
  padding-left: 2px;
  background: #f0f0f0;
}

.view-tools svg {
  width: 12px;
  height: 12px;
}

.gray-sun {
  color: #59636c;
}

.warm-sun {
  color: #e39a3b;
}

.canvas {
  flex: 1;
  display: block;
  width: 100%;
  min-height: 0;
  background: #000;
}

.axis-labels {
  fill: #d0d0d0;
  font-family: "Liberation Sans", Arial, sans-serif;
  font-size: 9px;
  text-anchor: end;
}

.dock {
  flex: 0 0 13px;
  padding-top: 4px;
  margin-left: -3px;
}

.dock-tab {
  display: flex;
  align-items: center;
  gap: 4px;
  width: 13px;
  padding: 4px 1px;
  height: 100px;
  writing-mode: vertical-rl;
  background: #c4c8c4;
  border: 1px solid #777;
  white-space: nowrap;
}

.dock-tab svg {
  width: 9px;
  height: 9px;
}

/* status bar */
.statusbar {
  flex: 0 0 11px;
  display: flex;
  align-items: flex-start;
  padding: 3px 0 0 2px;
  gap: 2px;
  overflow: hidden;
  background: linear-gradient(to right, #f0f0f0 638px, #d6d6d6 638px);
}

.statusbar .nav {
  width: 76px;
  height: 18px;
}

.statusbar .caret {
  margin-top: 6px;
}

.combo.models {
  flex: 0 0 99px;
  height: 16px;
  padding-left: 14px;
  background: #ececec;
  font-size: 8px;
}

.statusbar .ico {
  width: 15px;
  height: 15px;
  margin: 0 4px;
}

.view-toggles {
  display: flex;
}

.view-toggles button {
  width: 11px;
  height: 14px;
  border: 1px solid #aab;
}

.view-toggles .on {
  background: #6f9fd2;
}

.accu {
  width: 18px;
  height: 18px;
  margin-right: 6px;
}

.snaps {
  width: 300px;
  height: 18px;
}

/* floating toolbar */
.float-bar {
  position: absolute;
  top: 138px;
  left: 777px;
  width: 192px;
  height: 42px;
  background: linear-gradient(#fff 40%, #d9d9d9);
}

.float-bar header {
  display: flex;
  align-items: center;
  justify-content: space-between;
  height: 18px;
  padding-left: 4px;
  color: #8d8d8d;
}

.float-bar header i {
  width: 12px;
  height: 12px;
  background: #dedede;
}

.float-tools {
  display: flex;
  align-items: center;
  gap: 3px;
  height: 24px;
  padding: 0 3px 0 2px;
}

.float-tools svg {
  width: 15px;
  height: 15px;
}

.float-tools .combo {
  flex: 1;
}

/* tool settings dialog */
.dialog {
  position: absolute;
  top: 31px;
  left: 1045px;
  width: 149px;
  height: 114px;
  background: #fff;
  border: 1px solid #aaa;
  box-shadow: 0 1px 8px rgba(0, 0, 0, 0.3);
}

.dialog header {
  display: flex;
  align-items: center;
  gap: 3px;
  height: 21px;
  padding-left: 4px;
  color: #888;
}

.dialog .dlg-btns {
  width: 76px;
  height: 10px;
  margin-left: 7px;
}

.dlg-body {
  padding: 2px;
  background: #f1f1f1;
}

.field {
  display: grid;
  grid-template-columns: 16px 48px 1fr;
  align-items: center;
  height: 16px;
  padding: 0 2px;
  font-size: 7px;
}

.field.wide {
  grid-template-columns: 64px 1fr;
  padding-left: 0;
}

.field input[type="checkbox"] {
  appearance: none;
  width: 9px;
  height: 9px;
  margin-left: 1px;
  background: #fff;
  border: 1px solid #444;
}

.field label {
  justify-self: start;
  padding: 1px;
  background: #fafafa;
  white-space: nowrap;
}

.field input[type="text"] {
  width: 100%;
  height: 12px;
  padding: 0 1px;
  background: #fff;
}

.field .combo {
  height: 12px;
  border: none;
}

.dialog h3 {
  display: flex;
  align-items: center;
  justify-content: space-between;
  height: 16px;
  margin: 5px 0 2px;
  padding: 0 5px 0 17px;
  background: #c3d9f4;
  font-family: "DejaVu Sans", sans-serif;
  font-weight: bold;
}

.dialog h3 svg {
  width: 8px;
  height: 6px;
}
```
